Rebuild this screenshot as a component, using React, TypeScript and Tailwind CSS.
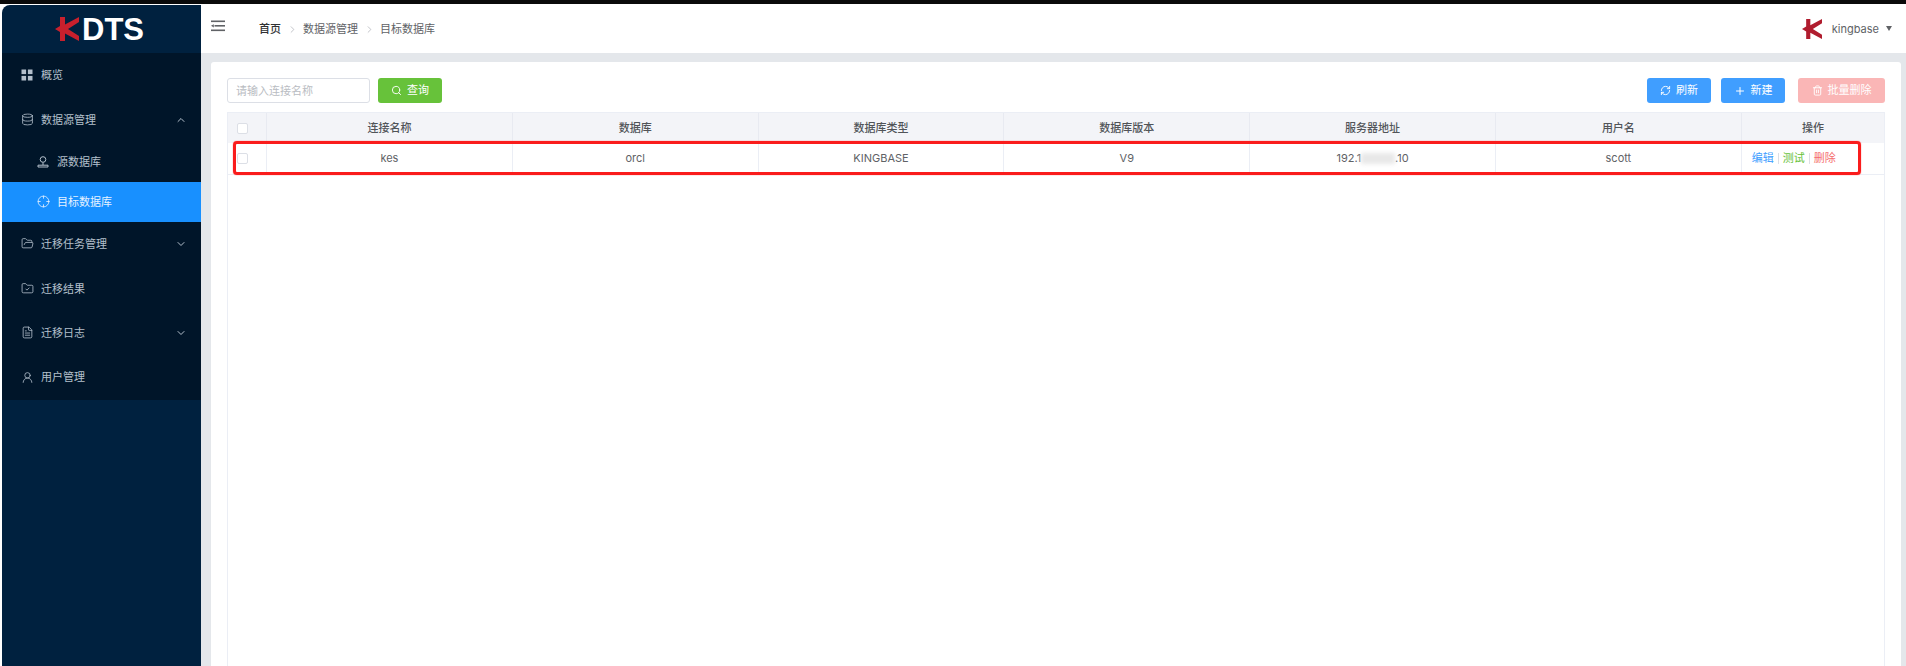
import React from "react";
import {
  ChevronDown,
  ChevronRight,
  ChevronUp,
  Crosshair,
  Database,
  FileText,
  FolderCheck,
  FolderOpen,
  Plus,
  RefreshCw,
  Search,
  Trash2,
  UserRound,
} from "lucide-react";

const FONT = "font-['Inter','Noto_Sans_CJK_SC',sans-serif]";
const ICON = "w-[13px] h-[13px] shrink-0";

function KMark({ className, color }: { className: string; color: string }) {
  return (
    <svg viewBox="0 0 24 24" className={className}>
      <polygon
        fill={color}
        points="5,0 10,0 10,7.5 24,0 24,5 13,12 24,19 24,24 10,16.5 10,24 5,24 5,15 0,12 5,9"
      />
    </svg>
  );
}

function GridIcon() {
  return (
    <svg viewBox="0 0 12 12" className="w-3 h-3" fill="currentColor">
      <rect x="0.5" y="0.5" width="4.6" height="4.6" />
      <rect x="6.9" y="0.5" width="4.6" height="4.6" />
      <rect x="0.5" y="6.9" width="4.6" height="4.6" />
      <rect x="6.9" y="6.9" width="4.6" height="4.6" />
    </svg>
  );
}

function SourceIcon() {
  return (
    <svg viewBox="0 0 12 12" className="w-3 h-3" fill="none" stroke="currentColor" strokeWidth="1">
      <circle cx="6" cy="3.5" r="2.8" />
      <path d="M6 6.5V9M1 9.2h10V11H1z" />
    </svg>
  );
}

function FoldIcon() {
  return (
    <svg viewBox="0 0 14 12" className="w-[14px] h-3" fill="#606266">
      <rect x="0" y="0.5" width="14" height="1.6" />
      <rect x="3.5" y="5" width="10.5" height="1.6" />
      <rect x="0" y="9.5" width="14" height="1.6" />
      <polygon points="0,5.8 2.8,4.2 2.8,7.4" />
    </svg>
  );
}

function MenuRow({
  icon,
  label,
  arrow,
}: {
  icon: React.ReactNode;
  label: string;
  arrow?: "up" | "down";
}) {
  return (
    <div className="flex items-center h-[44.4px] pl-[19px] pr-[14px] text-[#b4c0cc] text-[11px]">
      <span className="w-3 h-3 flex items-center justify-center">{icon}</span>
      <span className="ml-2 pt-px">{label}</span>
      {arrow === "up" && <ChevronUp className="ml-auto w-3 h-3" />}
      {arrow === "down" && <ChevronDown className="ml-auto w-3 h-3" />}
    </div>
  );
}

function SubRow({
  icon,
  label,
  active,
}: {
  icon: React.ReactNode;
  label: string;
  active?: boolean;
}) {
  return (
    <div
      className={`flex items-center h-10 pl-[35px] text-[11px] ${
        active ? "bg-[#1890ff] text-[#e6f2ff]" : "text-[#b4c0cc]"
      }`}
    >
      <span className="w-3 h-3 flex items-center justify-center">{icon}</span>
      <span className="ml-2 pt-px">{label}</span>
    </div>
  );
}

function Sidebar() {
  return (
    <aside className="w-[199px] shrink-0 bg-[#00213f] rounded-tl-lg overflow-hidden flex flex-col">
      <div className="h-[48px] flex items-center pl-[53px] gap-[3px]">
        <KMark className="w-6 h-6" color="#c8202d" />
        <span className="font-['Liberation_Sans',sans-serif] font-bold text-[31px] leading-none text-white">
          DTS
        </span>
      </div>
      <nav className="bg-[#001529] h-[347px]">
        <MenuRow icon={<GridIcon />} label="概览" />
        <MenuRow icon={<Database className={ICON} strokeWidth={1.5} />} label="数据源管理" arrow="up" />
        <SubRow icon={<SourceIcon />} label="源数据库" />
        <SubRow icon={<Crosshair className={ICON} strokeWidth={1.5} />} label="目标数据库" active />
        <MenuRow icon={<FolderOpen className={ICON} strokeWidth={1.5} />} label="迁移任务管理" arrow="down" />
        <MenuRow icon={<FolderCheck className={ICON} strokeWidth={1.5} />} label="迁移结果" />
        <MenuRow icon={<FileText className={ICON} strokeWidth={1.5} />} label="迁移日志" arrow="down" />
        <MenuRow icon={<UserRound className={ICON} strokeWidth={1.5} />} label="用户管理" />
      </nav>
    </aside>
  );
}

function Header() {
  return (
    <header className="h-[48px] shrink-0 bg-white flex items-center pl-[10px] pr-[14px] text-[11px]">
      <span className="-mt-[6px]">
        <FoldIcon />
      </span>
      <div className="ml-[34px] mt-px flex items-center text-[#606266]">
        <span className="font-medium text-[#303133]">首页</span>
        <ChevronRight className="mx-[5.5px] w-[11px] h-[11px] text-[#a8abb2]" strokeWidth={1.5} />
        <span>数据源管理</span>
        <ChevronRight className="mx-[5.5px] w-[11px] h-[11px] text-[#a8abb2]" strokeWidth={1.5} />
        <span>目标数据库</span>
      </div>
      <div className="ml-auto flex items-center text-[#606266]">
        <KMark className="w-5 h-[22px]" color="#b01c2e" />
        <span className="ml-[10px]">kingbase</span>
        <span className="ml-[7px] mb-px w-0 h-0 border-x-[3.5px] border-x-transparent border-t-[5px] border-t-[#606266]" />
      </div>
    </header>
  );
}

function ActionButton({
  icon,
  label,
  className,
}: {
  icon: React.ReactNode;
  label: string;
  className: string;
}) {
  return (
    <button
      type="button"
      className={`h-[25px] rounded-[3px] flex items-center justify-center gap-[5px] text-white text-[11px] ${className}`}
    >
      {icon}
      {label}
    </button>
  );
}

const columns = ["连接名称", "数据库", "数据库类型", "数据库版本", "服务器地址", "用户名"];

function Checkbox() {
  return <span className="block w-[11px] h-[11px] border border-[#dcdfe6] bg-white rounded-[2px]" />;
}

function DataTable() {
  return (
    <div className="relative flex-1 border-x border-[#ebeef5] text-[11px]">
      <div className="grid grid-cols-[38px_repeat(6,245.8px)_1fr] h-[31px] bg-[#f3f4f8] text-[#515458] font-medium border-t border-[#ebeef5]">
        <div className="flex items-center pl-[9px]">
          <Checkbox />
        </div>
        {columns.map((c) => (
          <div key={c} className="flex items-center justify-center border-l border-[#e8eaf1]">
            {c}
          </div>
        ))}
        <div className="flex items-center justify-center border-l border-[#e8eaf1]">操作</div>
      </div>
      <div className="grid grid-cols-[38px_repeat(6,245.8px)_1fr] h-[32px] text-[#606266] border-b border-[#ebeef5]">
        <div className="flex items-center pl-[9px]">
          <Checkbox />
        </div>
        <div className="flex items-center justify-center border-l border-[#ebeef5]">kes</div>
        <div className="flex items-center justify-center border-l border-[#ebeef5]">orcl</div>
        <div className="flex items-center justify-center border-l border-[#ebeef5]">KINGBASE</div>
        <div className="flex items-center justify-center border-l border-[#ebeef5]">V9</div>
        <div className="flex items-center justify-center border-l border-[#ebeef5]">
          192.1
          <span className="w-[34px] h-[11px] bg-[#e8e8e8] blur-[2px]" />
          .10
        </div>
        <div className="flex items-center justify-center border-l border-[#ebeef5]">scott</div>
        <div className="flex items-center pl-[10px] border-l border-[#ebeef5]">
          <span className="text-[#409eff]">编辑</span>
          <span className="mx-1 w-px h-[11px] bg-[#dcdfe6]" />
          <span className="text-[#67c23a]">测试</span>
          <span className="mx-1 w-px h-[11px] bg-[#dcdfe6]" />
          <span className="text-[#f56c6c]">删除</span>
        </div>
      </div>
      {/* red annotation drawn over the row */}
      <div className="absolute left-[5px] top-[29px] w-[1628px] h-[34px] border-[3px] border-[#fa1c1c] rounded-[4px] pointer-events-none shadow-[0_0_1px_#fa1c1c]" />
    </div>
  );
}

export default function App() {
  return (
    <div className={`w-full h-screen overflow-hidden flex flex-col bg-white ${FONT}`}>
      <div className="h-[4px] shrink-0 bg-[#0a0a0a]" />
      <div className="flex-1 flex min-h-0 pl-[2px] pt-px">
        <Sidebar />
        <div className="flex-1 min-w-0 flex flex-col bg-[#e4e7eb]">
          <Header />
          <main className="flex-1 min-h-0 mt-[9px] ml-[10px] mr-[5px] bg-white rounded-t-[3px] px-4 pt-4 flex flex-col">
            <div className="flex items-center h-[25px] mb-[9px]">
              <input
                placeholder="请输入连接名称"
                className="w-[143px] h-[25px] border border-[#dcdfe6] rounded-[3px] px-2 text-[11px] placeholder:text-[#b9bcc2] outline-none"
              />
              <ActionButton
                icon={<Search className="w-[11px] h-[11px]" />}
                label="查询"
                className="ml-2 w-16 bg-[#67c23a]"
              />
              <ActionButton
                icon={<RefreshCw className="w-[11px] h-[11px]" />}
                label="刷新"
                className="ml-auto w-16 bg-[#409eff]"
              />
              <ActionButton
                icon={<Plus className="w-3 h-3" />}
                label="新建"
                className="ml-[10px] w-16 bg-[#409eff]"
              />
              <ActionButton
                icon={<Trash2 className="w-[11px] h-[11px]" />}
                label="批量删除"
                className="ml-[13px] w-[87px] bg-[#fab6b6]"
              />
            </div>
            <DataTable />
          </main>
        </div>
      </div>
    </div>
  );
}
